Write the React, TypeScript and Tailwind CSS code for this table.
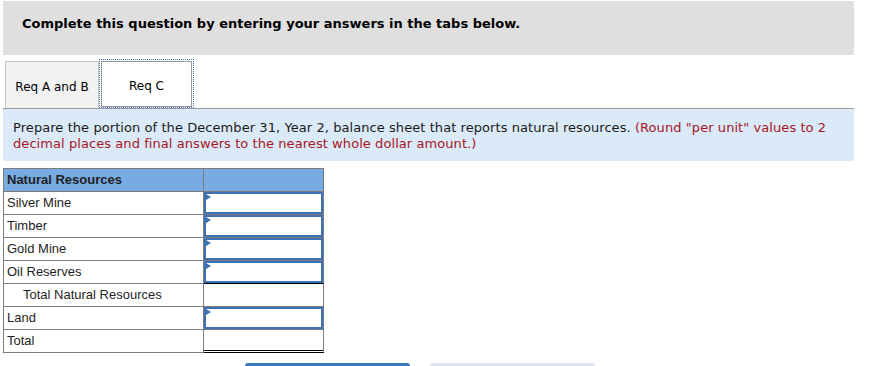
import * as React from "react"

const verdana = { fontFamily: '"DejaVu Sans", Verdana, sans-serif' }

interface Row {
    label: string
    input?: boolean
    indent?: boolean
    topBlack?: boolean
    double?: boolean
}

const rows: Row[] = [
    { label: "Silver Mine", input: true },
    { label: "Timber", input: true },
    { label: "Gold Mine", input: true },
    { label: "Oil Reserves", input: true },
    { label: "Total Natural Resources", indent: true, topBlack: true },
    { label: "Land", input: true },
    { label: "Total", double: true },
]

function AmountInput() {
    return (
        <div className="relative h-full w-full border-2 border-[#3e71b4] bg-white">
            {/* little flag in the corner */}
            <div className="absolute left-0 top-0 h-0 w-0 border-y-[3px] border-l-[5px] border-y-transparent border-l-[#3e71b4]" />
        </div>
    )
}

export default function App() {
    return (
        <div className="relative h-[366px] w-[884px] overflow-hidden bg-white">
            {/* Instructions bar */}
            <div
                className="ml-[3px] mt-[1px] h-[54px] w-[851px] bg-[#dfdfdf] pl-[19px] pt-[13px] text-[13px] font-bold text-black"
                style={verdana}
            >
                Complete this question by entering your answers in the tabs below.
            </div>

            {/* Tabs */}
            <div className="ml-[3px] mt-[7px] flex h-[47px] w-[851px] items-end border-b border-[#999]">
                <div
                    className="ml-[2px] flex h-[47px] w-[94px] items-center justify-center border border-b-0 border-[#c4c4c4] bg-[#f2f2f2] pt-[4px] text-[12px] text-black"
                    style={verdana}
                >
                    Req A and B
                </div>
                <div className="-mt-[1px] h-[49px] border border-dotted border-[#3d76c0] p-px">
                    <div
                        className="flex h-[46px] w-[91px] items-center justify-center border border-[#9a9a9a] bg-white pt-[4px] text-[12px] text-black"
                        style={verdana}
                    >
                        Req C
                    </div>
                </div>
            </div>

            {/* Prompt */}
            <div
                className="ml-[3px] h-[52px] w-[851px] bg-[#daeaf8] pl-[10px] pt-[11px] text-[13px] leading-[16px] tracking-[0.07px] text-[#1a1a1a]"
                style={verdana}
            >
                Prepare the portion of the December 31, Year 2, balance sheet that reports natural resources.{" "}
                <span className="text-[#a8161e]">
                    (Round "per unit" values to 2 decimal places and final answers to the nearest whole dollar amount.)
                </span>
            </div>

            {/* Table */}
            <div
                className="ml-[3px] mt-[7px] w-[321px] border-l border-t border-[#7c7c7c] text-[13px] text-[#1e1e1e]"
                style={{ fontFamily: '"Liberation Sans", Arial, sans-serif' }}
            >
                <div className="flex h-[23px] bg-[#78abe4]">
                    <div className="flex w-[200px] items-center border-b border-r border-[#7c7c7c] pl-[3px] font-bold text-[#222]">
                        Natural Resources
                    </div>
                    <div className="w-[120px] border-b border-r border-[#7c7c7c]" />
                </div>
                {rows.map((r) => (
                    <div key={r.label} className="flex h-[23px] bg-white">
                        <div
                            className={
                                r.indent
                                    ? "flex w-[200px] items-center border-b border-r border-[#7c7c7c] pl-[19px]"
                                    : "flex w-[200px] items-center border-b border-r border-[#7c7c7c] pl-[3px]"
                            }
                        >
                            {r.label}
                        </div>
                        <div
                            className={
                                r.double
                                    ? "w-[120px] border-b-[3px] border-r border-b-black border-double border-r-[#7c7c7c]"
                                    : r.topBlack
                                    ? "-mt-px h-[24px] w-[120px] border-b border-r border-t border-b-[#7c7c7c] border-r-[#7c7c7c] border-t-black"
                                    : "w-[120px] border-b border-r border-[#7c7c7c]"
                            }
                        >
                            {r.input && <AmountInput />}
                        </div>
                    </div>
                ))}
            </div>

            {/* Buttons peeking at the bottom */}
            <div className="mt-[10px] flex gap-[20px] pl-[245px]">
                <div className="h-[8px] w-[165px] rounded-t-[3px] bg-[#3b77c0]" />
                <div className="h-[8px] w-[165px] rounded-t-[3px] bg-[#dbe4f0]" />
            </div>
        </div>
    )
}
